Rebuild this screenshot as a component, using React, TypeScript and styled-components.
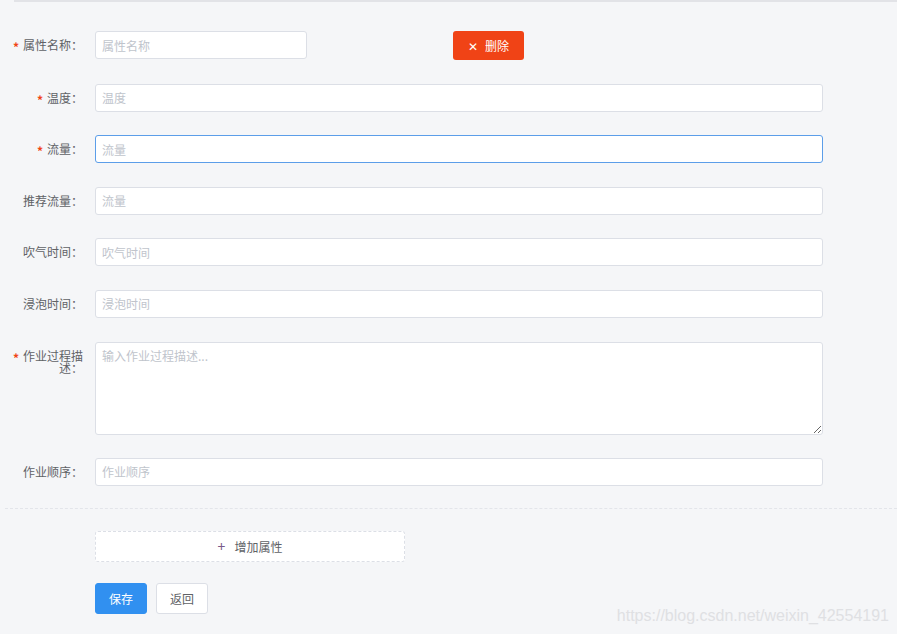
import React from "react";
import styled, { createGlobalStyle } from "styled-components";

const Global = createGlobalStyle`
  html, body { margin: 0; padding: 0; background: #f5f6f8; }
  body { font-family: "Noto Sans CJK SC", "Noto Sans", sans-serif; font-size: 12px; color: #606266; }
  * { box-sizing: border-box; }
`;

const Page = styled.div`
  position: relative;
  width: 897px;
  height: 634px;
  overflow: hidden;
  background: #f5f6f8;
`;

const TopBar = styled.div`
  height: 2px;
  margin-left: 14px;
  background: #e2e3e7;
`;

const Form = styled.div`
  padding: 29px 0 0 11px;
  display: flex;
  flex-direction: column;
`;

const Item = styled.div<{ $gap?: number }>`
  display: flex;
  align-items: flex-start;
  margin-bottom: ${(p) => (p.$gap ?? 23.6)}px;
`;

const Label = styled.label<{ $required?: boolean; $top?: boolean }>`
  width: 84px;
  flex: none;
  padding-right: 12px;
  text-align: right;
  font-size: 12px;
  line-height: ${(p) => (p.$top ? "12.5px" : "28px")};
  padding-top: ${(p) => (p.$top ? "8px" : "0")};
  color: #606266;
  &::before {
    content: ${(p) => (p.$required ? '"*"' : '""')};
    display: inline-block;
    transform: translateY(2px);
    font-weight: bold;
    color: #f04316;
    margin-right: 4px;
  }
`;

const Input = styled.input<{ $w?: number; $focus?: boolean }>`
  width: ${(p) => (p.$w ? `${p.$w}px` : "728px")};
  height: 28px;
  padding: 0 6px;
  border: 1px solid ${(p) => (p.$focus ? "#5c9ee9" : "#dcdfe6")};
  border-radius: 3px;
  background: #fff;
  font-family: inherit;
  font-size: 12px;
  color: #606266;
  outline: none;
  &::placeholder { color: #c0c4cc; }
`;

const TextArea = styled.textarea`
  width: 728px;
  height: 93px;
  padding: 4px 6px;
  border: 1px solid #dcdfe6;
  border-radius: 3px;
  background: #fff;
  font-family: inherit;
  font-size: 12px;
  line-height: 1.5;
  color: #606266;
  outline: none;
  resize: vertical;
  &::placeholder { color: #c0c4cc; }
`;

const DangerButton = styled.button`
  margin-left: 146px;
  width: 71px;
  height: 29px;
  border: none;
  border-radius: 3px;
  background: #f04316;
  color: #fff;
  font-family: inherit;
  font-size: 12px;
  display: flex;
  align-items: center;
  justify-content: center;
  gap: 7px;
  padding: 0;
`;

const Divider = styled.div`
  margin: 0 0 22px -6px;
  border-top: 1px dashed #e3e5ea;
`;

const Actions = styled.div`
  padding-left: 84px;
  display: flex;
  flex-direction: column;
`;

const AddButton = styled.button`
  width: 310px;
  height: 31px;
  border: 1px dashed #dcdfe6;
  border-radius: 3px;
  background: #fff;
  color: #606266;
  font-family: inherit;
  font-size: 12px;
  display: flex;
  align-items: center;
  justify-content: center;
  gap: 9px;
  padding: 0;
  margin-bottom: 21px;
`;

const Plus = styled.span`
  color: #7a5a8a;
  font-size: 14px;
  line-height: 1;
`;

const ButtonRow = styled.div`
  display: flex;
  gap: 9px;
`;

const Btn = styled.button<{ $primary?: boolean }>`
  width: 52px;
  height: 31px;
  border-radius: 3px;
  border: 1px solid ${(p) => (p.$primary ? "#3190f0" : "#dcdfe6")};
  background: ${(p) => (p.$primary ? "#3190f0" : "#fff")};
  color: ${(p) => (p.$primary ? "#fff" : "#606266")};
  font-family: inherit;
  font-size: 12px;
  padding: 0;
`;

const Watermark = styled.div`
  position: absolute;
  right: 8px;
  bottom: 9px;
  font-family: "Liberation Sans", Arial, sans-serif;
  font-size: 16px;
  color: #dfe0e3;
`;

export default function App() {
  return (
    <Page>
      <Global />
      <TopBar />
      <Form>
        <Item>
          <Label $required>属性名称：</Label>
          <Input $w={212} placeholder="属性名称" />
          <DangerButton>
            <span>✕</span>
            <span>删除</span>
          </DangerButton>
        </Item>
        <Item>
          <Label $required>温度：</Label>
          <Input placeholder="温度" />
        </Item>
        <Item>
          <Label $required>流量：</Label>
          <Input $focus placeholder="流量" />
        </Item>
        <Item>
          <Label>推荐流量：</Label>
          <Input placeholder="流量" />
        </Item>
        <Item>
          <Label>吹气时间：</Label>
          <Input placeholder="吹气时间" />
        </Item>
        <Item>
          <Label>浸泡时间：</Label>
          <Input placeholder="浸泡时间" />
        </Item>
        <Item $gap={23}>
          <Label $required $top>作业过程描述：</Label>
          <TextArea placeholder="输入作业过程描述..." />
        </Item>
        <Item $gap={22}>
          <Label>作业顺序：</Label>
          <Input placeholder="作业顺序" />
        </Item>
        <Divider />
        <Actions>
          <AddButton>
            <Plus>+</Plus>
            <span>增加属性</span>
          </AddButton>
          <ButtonRow>
            <Btn $primary>保存</Btn>
            <Btn>返回</Btn>
          </ButtonRow>
        </Actions>
      </Form>
      <Watermark>https://blog.csdn.net/weixin_42554191</Watermark>
    </Page>
  );
}
